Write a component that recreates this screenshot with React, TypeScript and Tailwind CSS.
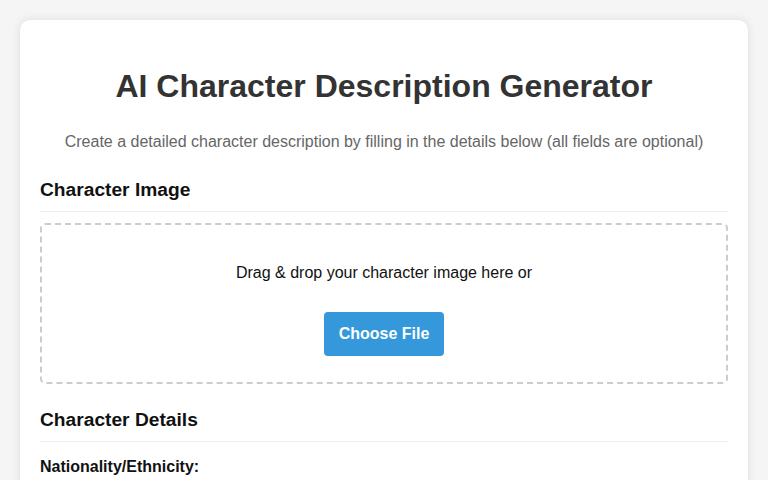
import React from "react";

const App = () => {
  return (
    <div
      className="min-h-screen bg-[#f5f5f5] pt-[20px] px-[20px] pb-[20px]"
      style={{ fontFamily: '"Liberation Sans", Arial, sans-serif' }}
    >
      <div className="bg-white rounded-[10px] shadow-[0_0_10px_rgba(0,0,0,0.1)] px-[20px] pt-[48px] pb-[30px]">
        {/* Header */}
        <h1 className="text-center text-[32px] leading-[37px] font-bold text-[#333]">
          AI Character Description Generator
        </h1>
        <p className="mt-[28px] text-center text-[16px] leading-[18px] text-[#666]">
          Create a detailed character description by filling in the details below (all fields are optional)
        </p>

        {/* Character Image */}
        <h2 className="mt-[28px] text-[19.2px] leading-[22px] font-bold text-[#111] pb-[10px] border-b border-[#eee]">
          Character Image
        </h2>
        <div className="mt-[11px] border-2 border-dashed border-[#ccc] rounded-[5px] pt-[39px] pb-[26px] flex flex-col items-center">
          <p className="text-[16px] leading-[18px] text-[#111]">
            Drag &amp; drop your character image here or
          </p>
          <button className="mt-[30px] h-[44px] w-[120px] rounded-[4px] bg-[#3498db] text-white text-[16px] font-bold">
            Choose File
          </button>
        </div>

        {/* Character Details */}
        <h2 className="mt-[25px] text-[19.2px] leading-[22px] font-bold text-[#111] pb-[10px] border-b border-[#eee]">
          Character Details
        </h2>
        <div className="mt-[16px] flex flex-col gap-[8px]">
          <label className="text-[16px] leading-[18px] font-bold text-[#111]">
            Nationality/Ethnicity:
          </label>
          <input
            type="text"
            className="h-[38px] w-full border border-[#ddd] rounded-[4px] px-[10px] text-[16px]"
          />
        </div>
      </div>
    </div>
  );
};

export default App;
